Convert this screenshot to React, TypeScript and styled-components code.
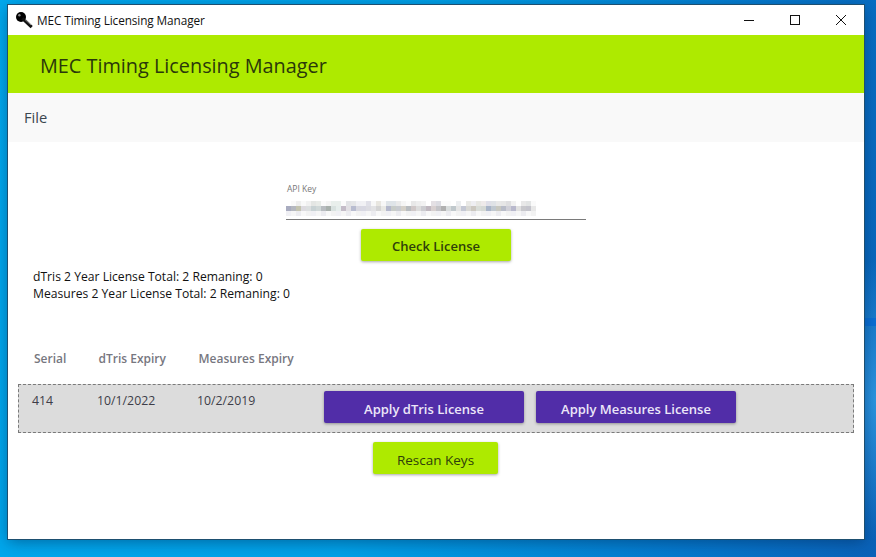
import React from "react";
import styled, { createGlobalStyle } from "styled-components";

const Global = createGlobalStyle`
  html, body { margin: 0; padding: 0; }
  body { font-family: "Open Sans", "Noto Sans", "Liberation Sans", sans-serif; }
  * { box-sizing: border-box; }
`;

const Desktop = styled.div`
  width: 876px; height: 557px; overflow: hidden;
  padding: 5px 12px 18px 8px;
  background:
    linear-gradient(#0a6fd4, #0a6fd4) right 318px / 12px 8px no-repeat,
    radial-gradient(ellipse 60px 140px at 876px 400px, rgba(60,170,240,.7), transparent),
    linear-gradient(100deg, #00a9ee 0%, #00a0e6 45%, #0578cc 80%, #0a62b8 100%);
`;
const Window = styled.div`
  height: 534px; display: flex; flex-direction: column; background: #fff;
  box-shadow: 0 0 0 1px #1d4f70, 0 3px 14px rgba(0,30,70,.45);
`;
const TitleBar = styled.div`
  height: 30px; flex: none; display: flex; align-items: center; background: #fff; padding-left: 7px;
`;
const TitleText = styled.span`
  margin-left: 4px; font-size: 11.8px; color: #111; letter-spacing: -.1px;
`;
const WinControls = styled.div`margin-left: auto; display: flex; align-items: center;`;
const WinButton = styled.div`
  width: 46px; height: 30px; display: flex; align-items: center; justify-content: center;
`;
const Banner = styled.header`
  height: 58px; flex: none; background: #aeea00; display: flex; align-items: center; padding: 3px 0 0 32px;
`;
const BannerTitle = styled.h1`
  margin: 0; font-size: 19.85px; font-weight: 500; color: #2a380a;
`;
const MenuBar = styled.nav`
  height: 49px; flex: none; background: #f9f9f9; display: flex; align-items: center; padding: 0 0 2px 16px;
  font-size: 14.7px; color: #3c4650;
`;
const Content = styled.main`flex: 1; display: flex; flex-direction: column; padding: 0 10px;`;
const KeyForm = styled.section`
  display: flex; flex-direction: column; align-items: center; padding-top: 41px;
`;
const KeyField = styled.div`
  width: 300px; height: 37px; border-bottom: 1px solid #7a7a7a; display: flex; flex-direction: column;
`;
const KeyLabel = styled.label`font-size: 8.5px; line-height: 12px; color: #777; padding-left: 1px;`;
const Blur = styled.svg`margin-top: 6px; display: block;`;
const Button = styled.button<{ $w: number; $purple?: boolean; $regular?: boolean }>`
  width: ${p => p.$w}px; flex: none; height: 32px; border: 0; border-radius: 2px;
  padding: ${p => (p.$purple || p.$regular ? 4 : 2)}px 0 0;
  font-family: inherit; font-size: ${p => (p.$regular ? 13.5 : 13)}px; font-weight: ${p => (p.$regular ? 500 : 600)};
  background: ${p => (p.$purple ? "#512da8" : "#aeea00")};
  color: ${p => (p.$purple ? "#ece6f8" : "#2f3f0a")};
  box-shadow: 0 1px 3px rgba(0,0,0,.35);
`;
const CheckButton = styled(Button)`margin-top: 9px;`;
const Totals = styled.div`
  margin-top: 7px; padding-left: 15px; font-size: 12.15px; line-height: 17px; color: #111;
`;
const HeaderRow = styled.div`
  margin-top: 48px; display: grid; grid-template-columns: 64.5px 100px auto; padding-left: 16px;
  font-size: 12px; line-height: 17px; font-weight: 600; color: #77777f;
`;
const DataRow = styled.div`
  margin-top: 17px; height: 49px; background: #dcdcdc; border: 1px dashed #7a7a7a;
  display: grid; grid-template-columns: 65px 100px 127px 1fr;
  padding: 6px 0 0 13px; font-size: 12.3px; color: #3d3d48;
`;
const Cell = styled.div`line-height: 17px; padding-top: 1px;`;
const Actions = styled.div`display: flex; gap: 12px;`;
const Footer = styled.div`display: flex; justify-content: center; margin-top: 9px; padding: 0 1px 0 0;`;

const KeyIcon = () => (
  <svg width="18" height="18" viewBox="0 0 18 18">
    <circle cx="6" cy="6" r="5" fill="#000" />
    <circle cx="4.4" cy="4.2" r="1.2" fill="#888" />
    <path d="M8.5 8.5 L15.5 15" stroke="#111" strokeWidth="3.2" strokeLinecap="square" />
    <path d="M10 8.5 L16 14" stroke="#888" strokeWidth="1" />
  </svg>
);

const top = [
  "#fff","#fafafa","#eeeeee","#f9f9f9","#f1f1f1","#e4e6e4","#e8ebe8","#fafafa","#f4f4f4","#e9efec",
  "#e9efec","#fbfbfb","#e2e3e6","#e5e6e8","#f0f0f4","#f1f1f4","#e0e0e8","#f7f7f7","#e8e6e0","#f7f7f7",
  "#dfe4e8","#dfe4e8","#eaeaea","#f5f5f5","#fbfbfb","#e8e8e8","#eeeeee","#f2f2f2","#ffffff","#e4e0e4",
  "#dcdce2","#fbfbfb","#fbfbfb","#fff","#eceef0","#fff","#e9e9e6","#eeeef2","#e7e7e3","#eeeaea",
  "#dfdfe8","#dfe2e6","#e8e8e8","#e6e6e6","#dedee0","#f0f0f0","#fdfdfd","#e8e8e8","#e2e4e4","#fafafa",
];
const mid = [
  "#a9acc0","#b5b8c0","#c4c4b0","#dddbe0","#dcdfe0","#c8d2d4","#d0d8d8","#b8bcc0","#a8b0ac","#d9e2e0",
  "#e6eeec","#c4bcc8","#e2e0e4","#b8bcd0","#d8d8e0","#d8d8e2","#dcdce2","#e2e2e4","#d4d4d4","#e8e8e4",
  "#b4b8cc","#c8ccc8","#c8cbd0","#d4d0c8","#b8bcc0","#d0c8c8","#dcdcdc","#ccccd0","#c0b8c0","#d8d0d0",
  "#c4c4c8","#b0b0b0","#d8dcdc","#c0c8cc","#e4e4e4","#c4c8d4","#d8d8d4","#ccc8c0","#d8dcd8","#d4d8d4",
  "#a8b4c8","#c0c8d0","#c8c8c0","#b8bcc8","#d0d0d8","#b8b8cc","#e0e0e0","#c8c8cc","#c4c4cc","#e8e8e8",
];
const low = ["#f0f0f4", "#f6f6f6", "#ececf0", "#f8f8f8", "#f2f2f2"];

export default function App() {
  return (
    <Desktop>
      <Global />
      <Window>
        <TitleBar>
          <KeyIcon />
          <TitleText>MEC Timing Licensing Manager</TitleText>
          <WinControls>
            <WinButton>
              <svg width="10" height="10" viewBox="0 0 10 10"><path d="M0 5.5H10" stroke="#111" /></svg>
            </WinButton>
            <WinButton>
              <svg width="10" height="10" viewBox="0 0 10 10"><rect x=".5" y=".5" width="9" height="9" fill="none" stroke="#111" /></svg>
            </WinButton>
            <WinButton>
              <svg width="10" height="10" viewBox="0 0 10 10"><path d="M0 0L10 10M10 0L0 10" stroke="#111" strokeWidth="1" /></svg>
            </WinButton>
          </WinControls>
        </TitleBar>
        <Banner><BannerTitle>MEC Timing Licensing Manager</BannerTitle></Banner>
        <MenuBar>File</MenuBar>
        <Content>
          <KeyForm>
            <KeyField>
              <KeyLabel>API Key</KeyLabel>
              <Blur width="250" height="16" viewBox="0 0 250 16" shapeRendering="crispEdges">
                {top.map((c, i) => <rect key={`t${i}`} x={i * 5} y={0} width={5} height={5} fill={c} />)}
                {mid.map((c, i) => <rect key={`m${i}`} x={i * 5} y={5} width={5} height={5} fill={c} />)}
                {mid.map((_, i) => <rect key={`l${i}`} x={i * 5} y={10} width={5} height={5} fill={low[i % 5]} />)}
              </Blur>
            </KeyField>
            <CheckButton $w={150}>Check License</CheckButton>
          </KeyForm>
          <Totals>
            <div>dTris 2 Year License Total: 2 Remaning: 0</div>
            <div>Measures 2 Year License Total: 2 Remaning: 0</div>
          </Totals>
          <HeaderRow>
            <div>Serial</div>
            <div>dTris Expiry</div>
            <div>Measures Expiry</div>
          </HeaderRow>
          <DataRow>
            <Cell>414</Cell>
            <Cell>10/1/2022</Cell>
            <Cell>10/2/2019</Cell>
            <Actions>
              <Button $w={200} $purple>Apply dTris License</Button>
              <Button $w={200} $purple>Apply Measures License</Button>
            </Actions>
          </DataRow>
          <Footer><Button $w={125} $regular>Rescan Keys</Button></Footer>
        </Content>
      </Window>
    </Desktop>
  );
}
